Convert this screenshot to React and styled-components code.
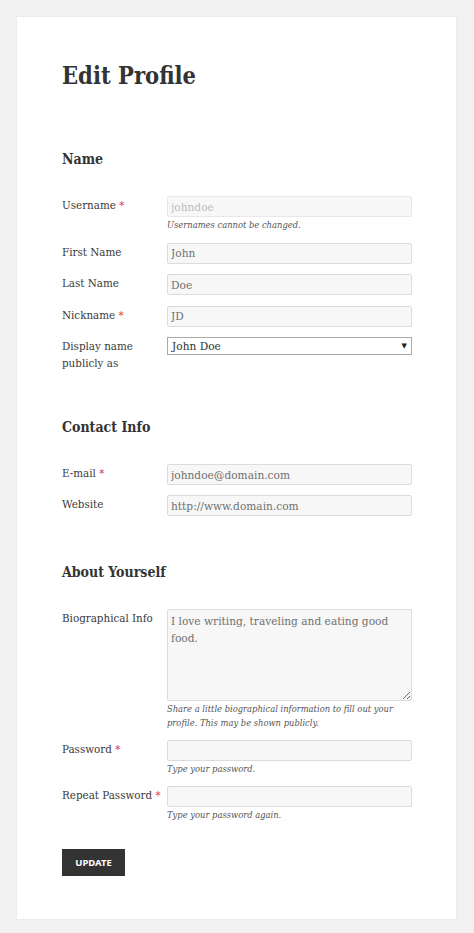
import React, { useState } from 'react';
import styled, { createGlobalStyle } from 'styled-components';

const GlobalStyle = createGlobalStyle`
    html, body {
        margin : 0;
        padding : 0;
        background : #f1f1f1;
    }
    * {
        box-sizing : border-box;
    }
`

const App = () => {
    const [bio, setBio] = useState('I love writing, traveling and eating good food.')
    return (
        <Page>
            <GlobalStyle />
            <Card>
                <Title>Edit Profile</Title>

                {/* Name */}
                <Section $top={58}>
                    <SectionTitle>Name</SectionTitle>
                    <Fields $gap={10.5}>
                        <Row>
                            <Label>Username <Req>*</Req></Label>
                            <Field>
                                <Input defaultValue="johndoe" disabled />
                                <Help>Usernames cannot be changed.</Help>
                            </Field>
                        </Row>
                        <Row>
                            <Label>First Name</Label>
                            <Field><Input defaultValue="John" /></Field>
                        </Row>
                        <Row>
                            <Label>Last Name</Label>
                            <Field><Input defaultValue="Doe" /></Field>
                        </Row>
                        <Row>
                            <Label>Nickname <Req>*</Req></Label>
                            <Field><Input defaultValue="JD" /></Field>
                        </Row>
                        <Row>
                            <Label>Display name publicly as</Label>
                            <Field>
                                <Select>
                                    <span>John Doe</span>
                                    <Caret>▼</Caret>
                                </Select>
                            </Field>
                        </Row>
                    </Fields>
                </Section>

                {/* Contact Info */}
                <Section $top={45}>
                    <SectionTitle>Contact Info</SectionTitle>
                    <Fields $gap={10}>
                        <Row>
                            <Label>E-mail <Req>*</Req></Label>
                            <Field><Input defaultValue="johndoe@domain.com" /></Field>
                        </Row>
                        <Row>
                            <Label>Website</Label>
                            <Field><Input defaultValue="http://www.domain.com" /></Field>
                        </Row>
                    </Fields>
                </Section>

                {/* About Yourself */}
                <Section $top={46}>
                    <SectionTitle>About Yourself</SectionTitle>
                    <Fields $gap={10}>
                        <Row>
                            <Label>Biographical Info</Label>
                            <Field>
                                <TextArea value={bio} onChange={e => setBio(e.target.value)} />
                                <Help>Share a little biographical information to fill out your profile. This may be shown publicly.</Help>
                            </Field>
                        </Row>
                        <Row>
                            <Label>Password <Req>*</Req></Label>
                            <Field>
                                <Input type="password" />
                                <Help>Type your password.</Help>
                            </Field>
                        </Row>
                        <Row>
                            <Label>Repeat Password <Req>*</Req></Label>
                            <Field>
                                <Input type="password" />
                                <Help>Type your password again.</Help>
                            </Field>
                        </Row>
                    </Fields>
                </Section>

                <Button>Update</Button>
            </Card>
        </Page>
    );
};

// StyledComponent
const Page = styled.div`
    padding : 17px 18px 14px 17px;
    font-family : "DejaVu Serif Condensed", "DejaVu Serif", serif;
    color : #333;
`
const Card = styled.div`
    background : #fff;
    box-shadow : 0 0 1px rgba(0,0,0,0.12);
    padding : 44px 45px 43px 45px;
    min-height : 902px;
`
const Title = styled.h1`
    margin : 0;
    font-size : 23.5px;
    line-height : 30px;
    font-weight : bold;
    color : #333;
`
const Section = styled.section`
    margin-top : ${p => p.$top}px;
`
const SectionTitle = styled.h2`
    margin : 0 0 27px 0;
    font-size : 14px;
    line-height : 20px;
    font-weight : bold;
    color : #333;
`
const Fields = styled.div`
    display : flex;
    flex-direction : column;
    gap : ${p => p.$gap}px;
`
const Row = styled.div`
    display : grid;
    grid-template-columns : 105px 245px;
    align-items : start;
`
const Label = styled.div`
    font-size : 11.5px;
    line-height : 17px;
    padding-top : 1px;
    color : #3a3a3a;
`
const Req = styled.span`
    color : #e03a3a;
`
const Field = styled.div`
    display : flex;
    flex-direction : column;
`
const Input = styled.input`
    width : 100%;
    height : 21px;
    padding : 0 3px;
    border : 1px solid #dcdcdc;
    border-radius : 2px;
    background : #f7f7f7;
    font-family : inherit;
    font-size : 11.8px;
    color : #707070;
    outline : none;
    &:disabled {
        color : #bdbdbd;
        border-color : #e8e8e8;
    }
`
const Select = styled.div`
    display : flex;
    align-items : center;
    justify-content : space-between;
    height : 18px;
    padding : 0 4px;
    border : 1px solid #a9a9a9;
    background : #fff;
    font-size : 11.8px;
    color : #333;
`
const Caret = styled.span`
    font-family : "DejaVu Sans", sans-serif;
    font-size : 7px;
    color : #222;
`
const TextArea = styled.textarea`
    width : 100%;
    height : 92px;
    padding : 3px 3px;
    border : 1px solid #dcdcdc;
    border-radius : 2px;
    background : #f7f7f7;
    font-family : inherit;
    font-size : 11.8px;
    line-height : 17px;
    color : #707070;
    resize : vertical;
    outline : none;
    display : block;
`
const Help = styled.p`
    margin : 0;
    padding-top : 1px;
    font-size : 9.3px;
    line-height : 14px;
    font-style : italic;
    color : #555;
`
const Button = styled.button`
    display : block;
    margin-top : 27px;
    width : 63px;
    height : 27px;
    padding : 0;
    border : none;
    background : #333;
    color : #fff;
    font-family : "Noto Sans", sans-serif;
    font-weight : bold;
    font-size : 9.5px;
    text-transform : uppercase;
`

export default App;
